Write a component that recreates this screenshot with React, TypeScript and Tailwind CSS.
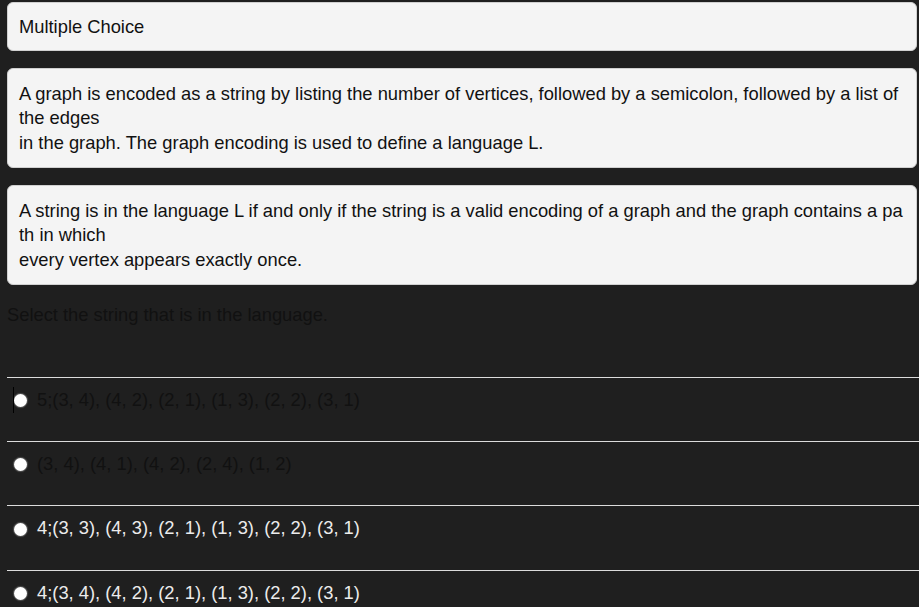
import React from "react";

const options = [
  { text: "5;(3, 4), (4, 2), (2, 1), (1, 3), (2, 2), (3, 1)", light: false, caret: true },
  { text: "(3, 4), (4, 1), (4, 2), (2, 4), (1, 2)", light: false, caret: false },
  { text: "4;(3, 3), (4, 3), (2, 1), (1, 3), (2, 2), (3, 1)", light: true, caret: false },
  { text: "4;(3, 4), (4, 2), (2, 1), (1, 3), (2, 2), (3, 1)", light: true, caret: false },
];

function Card({ children, className = "" }: { children: React.ReactNode; className?: string }) {
  return (
    <div
      className={`ml-[7px] w-[910px] rounded-[6px] border border-[#d0d0d0] bg-[#f4f4f4] px-[11px] text-[18.33px] leading-[24.6px] text-[#111] ${className}`}
    >
      {children}
    </div>
  );
}

export default function App() {
  return (
    <div
      className="h-[607px] w-[919px] overflow-hidden bg-[#1f1f1f] pt-[2px]"
      style={{ fontFamily: '"Liberation Sans", Arial, sans-serif' }}
    >
      <Card className="pt-[12px] pb-[10px]">Multiple Choice</Card>
      <Card className="mt-[17px] pt-[13px] pb-[11.5px]">
        A graph is encoded as a string by listing the number of vertices, followed by a semicolon, followed by a list of
        <br />
        the edges
        <br />
        in the graph. The graph encoding is used to define a language L.
      </Card>
      <Card className="mt-[17px] pt-[13px] pb-[11.5px]">
        A string is in the language L if and only if the string is a valid encoding of a graph and the graph contains a pa
        <br />
        th in which
        <br />
        every vertex appears exactly once.
      </Card>
      <div className="ml-[7px] mt-[17.5px] text-[18.33px] leading-[24px] text-[#111]">
        Select the string that is in the language.
      </div>
      <div className="ml-[7px] mt-[50px]">
        {options.map((o, i) => (
          <div
            key={i}
            className="relative flex h-[64.3px] items-start border-t border-[#dcdcdc] pt-[11px]"
          >
            {o.caret && <span className="absolute left-[6px] top-[9px] h-[26px] w-px bg-black" />}
            <span className="mt-[5.5px] ml-[7px] h-[13px] w-[13px] shrink-0 rounded-full bg-white shadow-[0_0_1px_1px_rgba(120,120,120,0.6)]" />
            <span
              className={`ml-[10px] text-[18.33px] leading-[22px] ${o.light ? "text-[#ececec]" : "text-[#111]"}`}
            >
              {o.text}
            </span>
          </div>
        ))}
      </div>
    </div>
  );
}
